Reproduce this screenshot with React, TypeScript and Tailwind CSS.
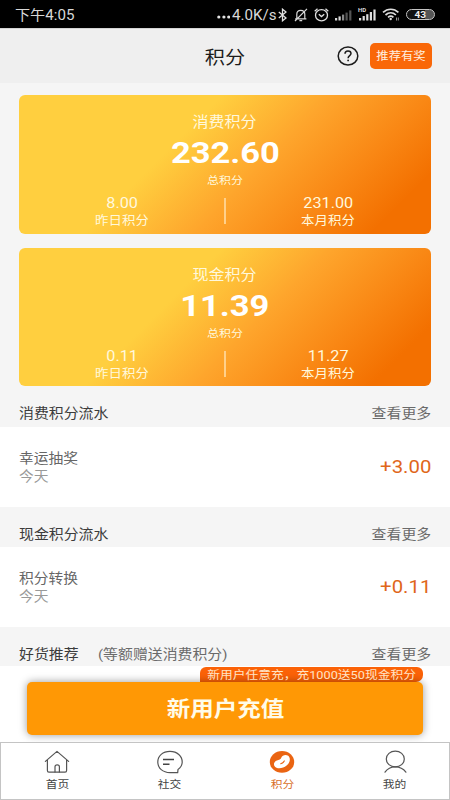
import clsx from "clsx";
import type { ReactNode } from "react";

type PointsCardProps = {
  title: string;
  total: string;
  yesterday: string;
  month: string;
};

// The whole app uses slightly widened lettering
function Wide({ children, className = "scale-x-[1.12]" }: { children: ReactNode; className?: string }) {
  return <span className={clsx("inline-block whitespace-nowrap", className)}>{children}</span>;
}

function StatusBar() {
  return (
    <div className="flex h-7 items-center bg-black pt-px pr-[15px] pl-[15px] text-[14px] leading-none text-[#d8d8d8]">
      <Wide className="origin-left scale-x-[1.08]">下午4:05</Wide>
      <div className="ml-auto flex items-center">
        <svg className="mt-[5px] mr-[2px] h-[4px] w-[13px]" viewBox="0 0 13 4" fill="#e4e4e4">
          <circle cx="1.8" cy="2" r="1.6" />
          <circle cx="6.9" cy="2" r="1.6" />
          <circle cx="11.7" cy="2" r="1.6" />
        </svg>
        <span className="w-[46px]">
          <Wide className="origin-left scale-x-[1.08]">4.0K/s</Wide>
        </span>
        <svg className="h-[14px] w-[9px]" viewBox="0 0 9 14" fill="none" stroke="#e0e0e0" strokeWidth="1.3">
          <path d="M.8 4 8 10 4.5 12.8V1.2L8 4 .8 10" />
        </svg>
        <svg className="ml-[7px] h-[14px] w-[14px]" viewBox="0 0 14 14" fill="none" stroke="#d8d8d8" strokeWidth="1.2">
          <path d="M1.2 10.8h11.2M2.8 10.5V6.2C2.8 3.8 4.5 2.3 6.8 2.3s4 1.5 4 3.9v4.3M5.4 12.7h2.8M1 13 13 .8" />
        </svg>
        <svg className="ml-[6px] h-[14px] w-[15px]" viewBox="0 0 15 14" fill="none" stroke="#e0e0e0" strokeWidth="1.3">
          <ellipse cx="7.5" cy="7.3" rx="6" ry="5.6" />
          <path d="M4.8 6.2 7.5 8.6l2.7-2.4M.7 3.2 3.5.8M14.3 3.2 11.5.8" />
        </svg>
        <svg className="ml-[6px] h-[14px] w-[17px]" viewBox="0 0 17 14" fill="#d8d8d8">
          <rect x="0" y="10" width="2.2" height="2.5" />
          <rect x="3.5" y="8.4" width="2.2" height="4.1" />
          <rect x="7" y="6.6" width="2.2" height="5.9" fill="#888" />
          <rect x="10.5" y="4.6" width="2.2" height="7.9" fill="#555" />
          <rect x="14.2" y="2.4" width="2.2" height="10.1" fill="#555" />
        </svg>
        <div className="relative ml-[6px] h-[14px] w-[18px]">
          <span className="absolute -top-px left-0 text-[6px] leading-none font-bold">HD</span>
          <svg className="h-[14px] w-[18px]" viewBox="0 0 18 14" fill="#e0e0e0">
            <rect x="1" y="10" width="2.2" height="2.5" />
            <rect x="4.6" y="8" width="2.2" height="4.5" />
            <rect x="8.2" y="6.2" width="2.2" height="6.3" />
            <rect x="11.8" y="4" width="2.2" height="8.5" />
            <rect x="15.4" y="1.5" width="2.2" height="11" />
          </svg>
        </div>
        <svg className="ml-[6px] h-[13px] w-[18px]" viewBox="0 0 18 13" fill="none" stroke="#dedede" strokeWidth="1.7">
          <path d="M1 4.4c4.6-4.2 11-4.2 15.4 0M3.5 7c3.2-2.9 7.4-2.9 10.4 0M6 9.4c1.8-1.5 3.8-1.5 5.4 0" />
          <circle cx="8.7" cy="11" r="1.2" fill="#dedede" stroke="none" />
          <path d="M14.5 9.5v3M16.3 9.5v3" stroke="#999" strokeWidth="1" />
        </svg>
        <div className="ml-[6px] flex h-[11px] w-[29px] items-center justify-center rounded-full border border-[#c4c4c4] bg-[linear-gradient(90deg,#111_65%,#555_65%)] pt-px text-[9px] leading-none font-bold text-[#eee]">
          <Wide>43</Wide>
        </div>
      </div>
    </div>
  );
}

function Header() {
  return (
    <div className="relative flex h-[55px] items-center justify-center border-t border-[#d4d4d4] bg-[#efefef]">
      <h1 className="mt-[3px] text-[18px] leading-none text-[#1c1c1c]">
        <Wide>积分</Wide>
      </h1>
      <div className="absolute inset-y-0 right-[18.5px] flex items-center gap-[11px]">
        <svg className="h-[22px] w-[22px]" viewBox="0 0 22 22" fill="none" stroke="#1c1c1c" strokeWidth="1.5">
          <ellipse cx="11" cy="11" rx="9.8" ry="9" />
          <path d="M8 8.8C8 7 9.2 6 11 6s3 1.1 3 2.6c0 2-2.9 2.2-2.9 4.6" />
          <circle cx="11.1" cy="15.4" r=".9" fill="#1c1c1c" stroke="none" />
        </svg>
        <button className="flex h-[26px] w-[62px] items-center justify-center rounded-[5px] bg-[#f96708] pt-px text-[11px] leading-none text-[#fff0e0]">
          <Wide>推荐有奖</Wide>
        </button>
      </div>
    </div>
  );
}

function CardStat({ value, label }: { value: string; label: string }) {
  return (
    <div className="flex flex-1 flex-col items-center">
      <Wide className="scale-x-[1.12] text-[14.5px] leading-[18px]">{value}</Wide>
      <Wide className="scale-x-[1.12] text-[12px] leading-[17px]">{label}</Wide>
    </div>
  );
}

function PointsCard({ title, total, yesterday, month }: PointsCardProps) {
  return (
    <section className="flex h-[138.5px] flex-col items-center rounded-[6px] bg-[linear-gradient(135deg,#ffcf3f_0%,#ffcf3f_37%,#fea52c_57%,#f98714_75%,#f37000_89%)] pt-[17px] text-[#fff8dc]">
      <Wide className="scale-x-[1.12] text-[14.3px] leading-[20px]">{title}</Wide>
      <Wide className="scale-x-[1.15] text-[30px] leading-[42px] font-bold text-white">{total}</Wide>
      <Wide className="scale-x-[1.12] text-[10.7px] leading-[14px]">总积分</Wide>
      <div className="mt-[7px] flex w-full items-center">
        <CardStat value={yesterday} label="昨日积分" />
        <div className="-mx-px mb-[3px] h-[26px] w-[2px] bg-[#ffd08a]" />
        <CardStat value={month} label="本月积分" />
      </div>
    </section>
  );
}

function SectionHead({ title, note, className }: { title: string; note?: string; className: string }) {
  return (
    <div className={clsx("flex items-center px-[19px] text-[13.3px] leading-none text-[#3c3c3c]", className)}>
      <Wide className="origin-left scale-x-[1.12]">{title}</Wide>
      {note ? <Wide className="ml-[26px] origin-left scale-x-[1.12] text-[#6a6a6a]">{note}</Wide> : null}
      <Wide className="ml-auto origin-right scale-x-[1.12] text-[#6a6a6a]">查看更多</Wide>
    </div>
  );
}

function RecordRow({ title, amount }: { title: string; amount: string }) {
  return (
    <div className="flex h-20 items-center justify-between bg-white px-[19px] pt-px">
      <div className="flex flex-col items-start text-[13.2px] leading-[18px]">
        <Wide className="origin-left scale-x-[1.12] text-[#666]">{title}</Wide>
        <Wide className="origin-left scale-x-[1.12] text-[#999]">今天</Wide>
      </div>
      <Wide className="mb-px origin-right scale-x-[1.13] text-[18px] leading-none font-[450] text-[#e0661a]">{amount}</Wide>
    </div>
  );
}

function HomeIcon() {
  return (
    <svg className="h-6 w-[26px]" viewBox="0 0 26 24" fill="none" stroke="#555" strokeWidth="1.2" strokeLinejoin="round" strokeLinecap="round">
      <path d="M1.4 11.4 13 1.4l11.6 10M3.4 10v10.6c0 1 .5 1.6 1.5 1.6h16.2c1 0 1.5-.6 1.5-1.6V10" />
      <path d="M11 22v-5.2c0-2.6 4.4-2.6 4.4 0V22" />
    </svg>
  );
}

function ChatIcon() {
  return (
    <svg className="h-6 w-[26px]" viewBox="0 0 26 24" fill="none" stroke="#555" strokeWidth="1.2" strokeLinejoin="round">
      <path d="M20.7 22.6H13C5.8 22.6.8 18.2.8 12S5.8 1.4 13 1.4 25.2 6 25.2 12c0 3.2-1.6 5.7-4.2 7.4z" />
      <path d="M6 9.4h11M6 14.2h6.5" stroke="#444" strokeWidth="1.5" />
    </svg>
  );
}

function BeanIcon() {
  return (
    <svg className="h-6 w-[26px]" viewBox="0 0 26 24">
      <ellipse cx="13" cy="11.9" rx="12.2" ry="10.9" fill="#ea6412" />
      <path
        d="M12.4 7.6C13.2 5 17 4 19.2 5.800c2.700 2.300 1.900 6.900-1.600 9.800-3.500 2.900-9 3.500-11.400 1.300-2.300-2.100-1.200-5.500 1.700-6.500 2.100-.7 3.900-.6 4.500-2.800z"
        fill="#fff"
      />
      <path d="M11.700 13.800c1.800-.6 2.900-1.600 3.600-2.900" fill="none" stroke="#ea6412" strokeWidth="1.1" strokeLinecap="round" />
    </svg>
  );
}

function UserIcon() {
  return (
    <svg className="h-6 w-[26px]" viewBox="0 0 26 24" fill="none" stroke="#555" strokeWidth="1.2" strokeLinecap="round">
      <ellipse cx="13.3" cy="9" rx="9" ry="7.9" />
      <path d="M3 22.2C5.2 19 9 16.9 13.3 16.9s8.200 2.100 10.600 5.300" />
    </svg>
  );
}

const tabs = [
  { label: "首页", icon: <HomeIcon /> },
  { label: "社交", icon: <ChatIcon /> },
  { label: "积分", icon: <BeanIcon />, active: true },
  { label: "我的", icon: <UserIcon /> },
];

export default function App() {
  return (
    <div className="flex h-[800px] w-[450px] flex-col overflow-hidden bg-[#f5f5f5] font-['Roboto','Noto_Sans_CJK_SC',sans-serif]">
      <StatusBar />
      <Header />

      <div className="flex flex-col gap-[14px] px-[19px] pt-3">
        <PointsCard title="消费积分" total="232.60" yesterday="8.00" month="231.00" />
        <PointsCard title="现金积分" total="11.39" yesterday="0.11" month="11.27" />
      </div>

      <SectionHead title="消费积分流水" className="h-[41px] pt-[15px]" />
      <RecordRow title="幸运抽奖" amount="+3.00" />
      <SectionHead title="现金积分流水" className="h-10 pt-4" />
      <RecordRow title="积分转换" amount="+0.11" />
      <SectionHead title="好货推荐" note="(等额赠送消费积分)" className="h-[39px] pt-4" />

      <div className="flex flex-1 flex-col bg-white px-[27px] pt-px">
        <div className="flex h-[15px] w-[223px] items-center justify-center self-end rounded-t-[6px] rounded-br-[7px] bg-[#fb6207] pt-[2px] text-[11.8px] leading-none text-[#ffe3c4]">
          <Wide className="scale-x-[1.08]">新用户任意充，充1000送50现金积分</Wide>
        </div>
        <button className="flex h-[53px] items-center justify-center rounded-[5px] bg-[#ff9805] pt-px text-[21px] leading-none font-bold text-[#fffbe8] shadow-[0_0_8px_rgba(0,0,0,0.4)]">
          <Wide>新用户充值</Wide>
        </button>
      </div>

      <nav className="-mr-px grid h-[58px] grid-cols-4 border border-r-0 border-[#c4c4c4] bg-white shadow-[inset_-2px_0_0_#c4c4c4]">
        {tabs.map((tab) => (
          <div
            key={tab.label}
            className={clsx("flex flex-col items-center pt-[7px]", tab.active ? "text-[#d9702c]" : "text-[#444]")}
          >
            {tab.icon}
            <Wide className="mt-1 scale-x-[1.12] text-[10.5px] leading-[14px]">{tab.label}</Wide>
          </div>
        ))}
      </nav>
    </div>
  );
}
